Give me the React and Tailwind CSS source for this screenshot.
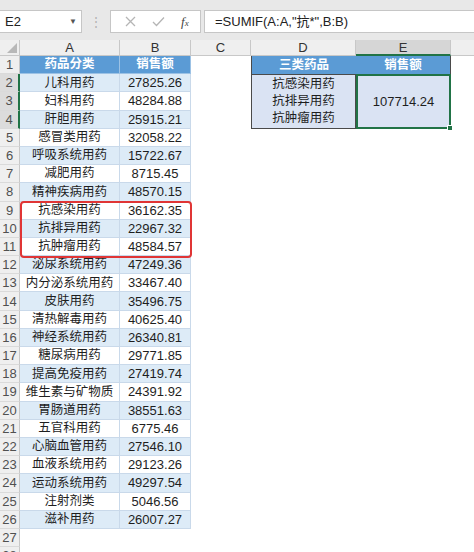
import React from "react";

const data = [
  ["儿科用药", "27825.26"],
  ["妇科用药", "48284.88"],
  ["肝胆用药", "25915.21"],
  ["感冒类用药", "32058.22"],
  ["呼吸系统用药", "15722.67"],
  ["减肥用药", "8715.45"],
  ["精神疾病用药", "48570.15"],
  ["抗感染用药", "36162.35"],
  ["抗排异用药", "22967.32"],
  ["抗肿瘤用药", "48584.57"],
  ["泌尿系统用药", "47249.36"],
  ["内分泌系统用药", "33467.40"],
  ["皮肤用药", "35496.75"],
  ["清热解毒用药", "40625.40"],
  ["神经系统用药", "26340.81"],
  ["糖尿病用药", "29771.85"],
  ["提高免疫用药", "27419.74"],
  ["维生素与矿物质", "24391.92"],
  ["胃肠道用药", "38551.63"],
  ["五官科用药", "6775.46"],
  ["心脑血管用药", "27546.10"],
  ["血液系统用药", "29123.26"],
  ["运动系统用药", "49297.54"],
  ["注射剂类", "5046.56"],
  ["滋补用药", "26007.27"],
];

const font = { fontFamily: '"Liberation Sans", "Noto Sans CJK SC", sans-serif' };

function RowNum({ n }) {
  const sel = n >= 2 && n <= 4;
  return (
    <div
      className={
        "flex items-center justify-center text-[13px] leading-none text-[#505050] border-b border-[#dadada] " +
        (sel ? "bg-[#dcdcdc] border-r-2 border-r-[#217346]" : "bg-[#efefef] border-r border-r-[#c8c8c8]")
      }
    >
      {n}
    </div>
  );
}

function Empty() {
  return <div className="bg-white" />;
}

export default function App() {
  const rows = [];
  rows.push(
    <React.Fragment key="r1">
      <RowNum n={1} />
      <div className="flex items-center justify-center bg-[#5b9bd5] text-white font-bold text-[12.5px] leading-none border-r border-b border-[#9cc2e5]">药品分类</div>
      <div className="flex items-center justify-center bg-[#5b9bd5] text-white font-bold text-[12.5px] leading-none border-r border-b border-[#9cc2e5]">销售额</div>
      <Empty />
      <div className="flex items-center justify-center bg-[#5b9bd5] text-white font-bold text-[12.5px] leading-none border-l border-[#4a4a4a]">三类药品</div>
      <div className="flex items-center justify-center bg-[#5b9bd5] text-white font-bold text-[12.5px] leading-none border-r border-[#4a4a4a]">销售额</div>
      <Empty />
    </React.Fragment>
  );
  for (let i = 0; i < 27; i++) {
    const n = i + 2;
    const d = data[i];
    const band = n % 2 === 0 ? "bg-[#ddebf7]" : "bg-white";
    rows.push(
      <React.Fragment key={"r" + n}>
        <RowNum n={n} />
        {d ? (
          <>
            <div className={"flex items-center justify-center text-[12.5px] leading-none text-[#1e1e1e] border-r border-b border-[#c9d9ea] " + band}>{d[0]}</div>
            <div className={"flex items-center justify-center text-[13px] leading-none text-[#1e1e1e] border-r border-b border-[#c9d9ea] " + band}>{d[1]}</div>
          </>
        ) : (
          <>
            <Empty />
            <Empty />
          </>
        )}
        <Empty />
        {n === 2 ? (
          <>
            <div className="row-span-3 flex flex-col items-center justify-center bg-[#dae3f3] border border-[#4a4a4a] text-[12.5px] leading-[17px] text-[#1e1e1e]">
              <span>抗感染用药</span>
              <span>抗排异用药</span>
              <span>抗肿瘤用药</span>
            </div>
            <div className="row-span-3 relative flex items-center justify-center bg-[#dae3f3] border-2 border-[#217346] text-[13px] leading-none text-[#1e1e1e]">
              107714.24
              <span className="absolute -right-[4px] -bottom-[4px] w-[6px] h-[6px] bg-[#217346] border border-white" />
            </div>
          </>
        ) : n === 3 || n === 4 ? null : (
          <>
            <Empty />
            <Empty />
          </>
        )}
        <Empty />
      </React.Fragment>
    );
  }

  return (
    <div className="w-[474px] h-[552px] overflow-hidden bg-white text-[#222]" style={font}>
      {/* Formula bar */}
      <div className="h-[40px] bg-[#e8e8e8] flex items-start pt-[10px]">
        <div className="w-[82px] h-[23px] bg-white border border-[#c6c6c6] border-l-0 flex items-center justify-between pl-[5px] pr-[4px]">
          <span className="text-[13px] text-[#222] leading-none">E2</span>
          <span className="text-[8px] text-[#555]">▼</span>
        </div>
        <div className="w-[28px] h-[23px] flex items-center justify-center text-[#b0b0b0] text-[12px]">⋮</div>
        <div className="w-[91px] h-[23px] bg-white border border-[#c6c6c6] flex items-center pl-[12px] gap-[16px]">
          <svg width="11" height="11" viewBox="0 0 11 11" className="ml-[2px]"><path d="M1 1L10 10M10 1L1 10" stroke="#b5b5b5" strokeWidth="1.3" /></svg>
          <svg width="13" height="11" viewBox="0 0 13 11"><path d="M1 6L4.5 9.5L12 1.5" stroke="#b5b5b5" strokeWidth="1.3" fill="none" /></svg>
          <span className="text-[13px] italic text-[#444] leading-none" style={{ fontFamily: '"Liberation Serif", serif' }}>f<span className="text-[9px]">x</span></span>
        </div>
        <div className="flex-1 ml-[3px] h-[23px] bg-white border border-[#c6c6c6] border-r-0 flex items-center pl-[10px]">
          <span className="text-[13px] text-[#222] leading-none">=SUMIF(A:A,"抗*",B:B)</span>
        </div>
      </div>

      {/* Sheet */}
      <div className="relative">
        <div className="grid grid-cols-[20px_100px_71px_60px_105px_95px_1fr] grid-rows-[16px_repeat(28,18.2px)]">
          <div className="bg-[#efefef] border-r border-b border-[#c8c8c8] relative">
            <svg width="10" height="10" viewBox="0 0 10 10" className="absolute right-[2px] bottom-[2px]"><path d="M10 0L10 10L0 10Z" fill="#b8b8b8" /></svg>
          </div>
          {["A", "B", "C", "D"].map((c) => (
            <div key={c} className="bg-[#efefef] border-r border-b border-[#c8c8c8] flex items-center justify-center text-[13px] leading-none text-[#333]">{c}</div>
          ))}
          <div className="bg-[#d6d6d6] border-r border-[#c8c8c8] border-b-2 border-b-[#217346] flex items-center justify-center text-[13px] leading-none text-[#333]">E</div>
          <div className="bg-[#efefef] border-b border-[#c8c8c8]" />
          {rows}
        </div>
        <div className="absolute left-[20px] top-[161px] w-[172px] h-[57px] border-2 border-[#e03535] rounded-[4px] pointer-events-none" />
      </div>
    </div>
  );
}
